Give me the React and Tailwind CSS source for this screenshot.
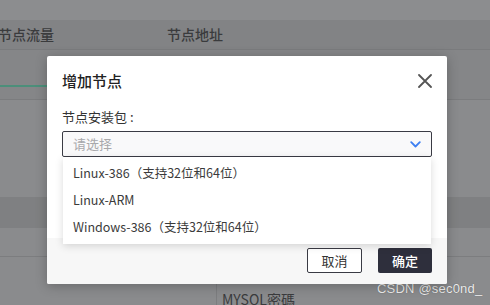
import React from "react";

const font = { fontFamily: '"Noto Sans CJK SC", "Noto Sans", sans-serif' };

export default function App() {
  return (
    <div className="relative w-[490px] h-[305px] overflow-hidden bg-[#8a8b8d]" style={font}>
      {/* background page (dimmed) */}
      <div className="flex flex-col">
        <div className="h-[20px] bg-[#8c8d8f]" />
        <div className="h-[30px] bg-[#828385] border-b border-[#7a7b7d] flex items-center text-[14px] text-[#3a3b3d] font-medium">
          <span className="ml-[-2px] w-[169px]">节点流量</span>
          <span>节点地址</span>
        </div>
        <div className="relative h-[50px] bg-[#858688] border-b border-[#7b7c7e]">
          <div className="absolute left-0 top-[35px] w-[60px] h-[2px] bg-[#4c8f7a]" />
        </div>
        <div className="h-[97px]" />
        <div className="h-[31px] bg-[#7f8082]" />
        <div className="h-[29px] border-b border-[#7c7d7f]" />
        <div className="flex h-[48px]">
          <div className="w-[216px]" />
          <div className="border-l border-[#7c7d7f] pl-[5px] pt-[33px] text-[14px] leading-[18px] text-[#3a3b3d]">MYSQL密碼</div>
        </div>
      </div>

      {/* watermark */}
      <div className="absolute left-[377px] top-[280px] text-[13px] leading-[18px] text-[#ececec] tracking-[0.2px] [text-shadow:0_0_1px_rgba(0,0,0,0.4)]" style={{ fontFamily: '"Liberation Sans", Arial, sans-serif' }}>
        CSDN @sec0nd_
      </div>

      {/* modal */}
      <div className="absolute left-[47px] top-[56px] w-[400px] h-[228px] bg-white rounded-[2px] shadow-[0_2px_12px_rgba(0,0,0,0.25)] flex flex-col overflow-visible">
        <div className="flex items-center justify-between px-[15px] pt-[15px] h-[35px]">
          <span className="text-[15px] leading-[20px] font-medium text-[#222]">增加节点</span>
          <svg width="14" height="14" viewBox="0 0 14 14" className="text-[#555]">
            <path d="M1 1L13 13M13 1L1 13" stroke="currentColor" strokeWidth="1.8" strokeLinecap="round" />
          </svg>
        </div>
        <div className="px-[15px] pt-[17px] flex-1 relative">
          <div className="text-[13px] leading-[18px] text-[#333]">节点安装包 :</div>
          <div className="mt-[5px] h-[26px] border border-[#3a3b44] rounded-[2px] bg-[#f9f9fa] flex items-center justify-between pl-[10px] pr-[10px]">
            <span className="text-[13px] text-[#a8a8ab]">请选择</span>
            <svg width="11" height="7" viewBox="0 0 11 7">
              <path d="M1.2 1.2L5.5 5.5L9.8 1.2" stroke="#3d7ff2" strokeWidth="1.8" fill="none" strokeLinecap="round" strokeLinejoin="round" />
            </svg>
          </div>
        </div>
        <div className="h-[46px] bg-[#f7f7f7] flex items-center justify-end gap-[16px] px-[15px] pb-[1px] rounded-b-[2px]">
          <button className="w-[55px] h-[25px] border border-[#3a3b44] bg-white rounded-[2px] text-[13px] text-[#333]">取消</button>
          <button className="w-[54px] h-[25px] bg-[#2e2f3c] rounded-[2px] text-[13px] text-white font-medium">确定</button>
        </div>

        {/* dropdown */}
        <div className="absolute left-[16px] top-[101px] w-[368px] bg-white shadow-[0_2px_8px_rgba(0,0,0,0.15)] py-[3px] z-10">
          {["Linux-386（支持32位和64位）", "Linux-ARM", "Windows-386（支持32位和64位）"].map((t) => (
            <div key={t} className="h-[27px] flex items-center px-[10px] text-[12.5px] text-[#3b3b3b]">{t}</div>
          ))}
        </div>
      </div>
    </div>
  );
}
